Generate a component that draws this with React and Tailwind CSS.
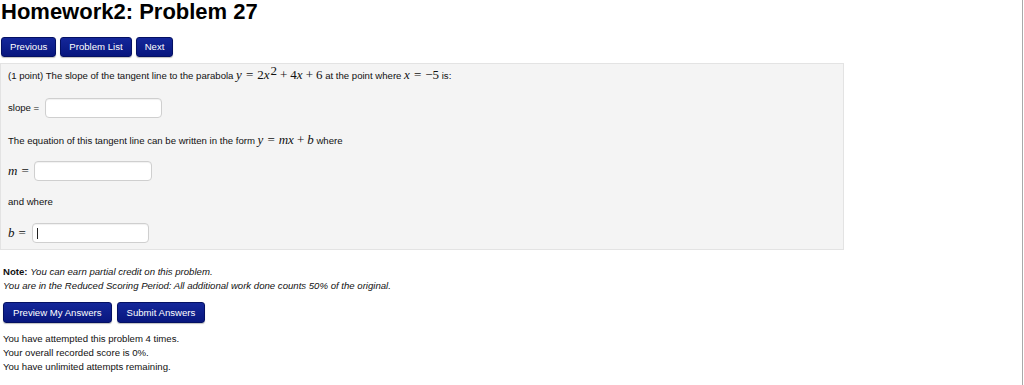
import React from "react";

const btn =
  "h-[20px] px-[8px] rounded-[3px] border border-[#041063] bg-linear-to-b from-[#14279a] to-[#08167e] text-white text-[9.6px] leading-[18px] shadow-[0_1px_1px_rgba(0,0,0,0.25)]";
const btn2 =
  "h-[21px] px-[9px] rounded-[3px] border border-[#041063] bg-linear-to-b from-[#14279a] to-[#08167e] text-white text-[9.6px] leading-[19px] shadow-[0_1px_1px_rgba(0,0,0,0.25)]";

const M = ({ children, className = "" }) => (
  <span className={"font-['Liberation_Serif',serif] text-[13px] leading-none " + className}>{children}</span>
);
const I = ({ children }) => <M className="italic">{children}</M>;
const Op = ({ children, w = "mx-[3px]" }) => <M className={"inline-block " + w}>{children}</M>;

const Box = ({ className = "", children }) => (
  <div
    className={
      "h-[20px] w-[117px] bg-white rounded-[4px] border border-[#cfcfcf] shadow-[inset_0_1px_1px_rgba(0,0,0,0.06)] flex items-center " +
      className
    }
  >
    {children}
  </div>
);

export default function App() {
  return (
    <div className="flex h-[385px] bg-white text-[#111] font-['Liberation_Sans',Arial,sans-serif]">
      <div className="w-[1022px]">
        <h1 className="pt-[1px] pl-[1px] text-[22px] font-bold leading-[22px] text-black">Homework2: Problem 27</h1>
        <div className="mt-[14px] flex gap-[4px] pl-[1px]">
          <button className={btn}>Previous</button>
          <button className={btn}>Problem List</button>
          <button className={btn}>Next</button>
        </div>

        <div className="mt-[6px] h-[187px] w-[844px] border border-[#e3e3e3] bg-[#f4f4f4] px-[7px] pt-[4px] text-[9.6px] leading-[14px]">
          <div className="h-[14px] whitespace-nowrap">
            (1 point) The slope of the tangent line to the parabola{" "}
            <I>y</I>
            <Op w="mx-[4px]">=</Op>
            <M>2</M>
            <I>x</I>
            <M className="text-[8.5px] relative -top-[4px] ml-[1px]">2</M>
            <Op>+</Op>
            <M>4</M>
            <I>x</I>
            <Op>+</Op>
            <M>6</M> at the point where <I>x</I>
            <Op w="mx-[4px]">=</Op>
            <M>−5</M> is:
          </div>

          <div className="mt-[16px] flex items-center gap-[6px] h-[20px]">
            <span>slope =</span>
            <Box />
          </div>

          <div className="mt-[15px] h-[14px] whitespace-nowrap">
            The equation of this tangent line can be written in the form <I>y</I>
            <Op w="mx-[4px]">=</Op>
            <I>mx</I>
            <Op>+</Op>
            <I>b</I> where
          </div>

          <div className="mt-[14px] flex items-center h-[20px]">
            <span className="w-[26px] whitespace-nowrap">
              <I>m</I>
              <Op w="ml-[4px]">=</Op>
            </span>
            <Box className="w-[118px]" />
          </div>

          <div className="mt-[14px] h-[14px] leading-[14px]">and where</div>

          <div className="mt-[14px] flex items-center h-[20px]">
            <span className="w-[24px] whitespace-nowrap">
              <I>b</I>
              <Op w="ml-[4px]">=</Op>
            </span>
            <Box className="w-[116px] border-[#8fb6ee] shadow-[0_0_3px_rgba(82,148,236,0.55)]">
              <span className="ml-[4px] h-[11px] w-px bg-[#222]" />
            </Box>
          </div>
        </div>

        <div className="pl-[3px] text-[9.6px] leading-[14px]">
          <div className="mt-[15px]">
            <span className="font-bold">Note:</span> <i>You can earn partial credit on this problem.</i>
          </div>
          <div>
            <i>You are in the Reduced Scoring Period: All additional work done counts 50% of the original.</i>
          </div>
          <div className="mt-[9px] flex gap-[5px]">
            <button className={btn2}>Preview My Answers</button>
            <button className={btn2}>Submit Answers</button>
          </div>
          <div className="mt-[9px]">
            <div>You have attempted this problem 4 times.</div>
            <div>Your overall recorded score is 0%.</div>
            <div>You have unlimited attempts remaining.</div>
          </div>
        </div>
      </div>
      <div className="w-px bg-[#a9a9a9]" />
      <div className="w-px bg-white" />
    </div>
  );
}
